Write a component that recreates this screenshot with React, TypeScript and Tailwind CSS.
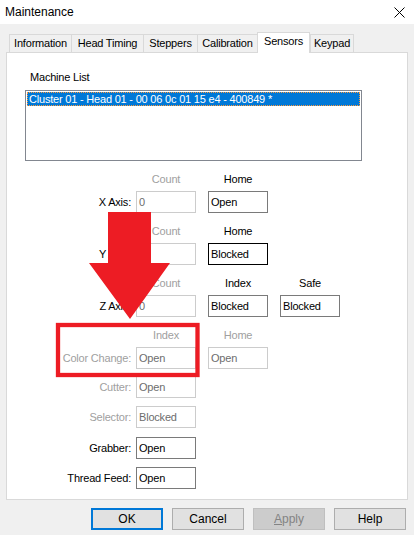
import React from 'react';

type Tone = 'disabled' | 'normal' | 'focus';

const tabs = ['Information', 'Head Timing', 'Steppers', 'Calibration', 'Sensors', 'Keypad'];
const tabWidths = ['w-[62px]', 'w-[72px]', 'w-[54px]', 'w-[60px]', 'w-[53px]', 'w-[44px]'];

function Box({ value, tone = 'normal' }: { value: string; tone?: Tone }) {
  const border =
    tone === 'disabled' ? 'border-[#cccccc] text-[#6d6d6d]' : tone === 'focus' ? 'border-black text-black' : 'border-[#7a7a7a] text-black';
  return (
    <div className={`w-[60px] h-[22px] border bg-white pl-[2px] flex items-center leading-[13px] ${border}`}>
      {value}
    </div>
  );
}

function Header({ cells }: { cells: { text: string; gray?: boolean }[] }) {
  return (
    <div className="flex h-[18px] leading-[13px]">
      <div className="w-[129px]" />
      <div className="flex gap-[12px]">
        {cells.map((c, i) => (
          <div key={i} className={`w-[60px] text-center ${c.gray ? 'text-[#a0a0a0]' : 'text-black'}`}>
            {c.text}
          </div>
        ))}
      </div>
    </div>
  );
}

function Row({ label, gray, children, className = '' }: { label: string; gray?: boolean; children: React.ReactNode; className?: string }) {
  return (
    <div className={`flex items-center h-[22px] ${className}`}>
      <div className={`w-[124px] text-right leading-[13px] ${gray ? 'text-[#a0a0a0]' : 'text-black'}`}>{label}</div>
      <div className="ml-[5px] flex gap-[12px]">{children}</div>
    </div>
  );
}

function Button({ label, variant }: { label: React.ReactNode; variant?: 'default' | 'disabled' }) {
  const cls =
    variant === 'default'
      ? 'border-2 border-[#0078d7] bg-[#e1e1e1] text-black'
      : variant === 'disabled'
      ? 'border border-[#bfbfbf] bg-[#cccccc] text-[#838383]'
      : 'border border-[#adadad] bg-[#e1e1e1] text-black';
  return <div className={`w-[72px] h-[22px] flex items-center justify-center text-[12px] ${cls}`}>{label}</div>;
}

export default function App() {
  return (
    <div
      className="relative w-[414px] h-[535px] bg-[#f0f0f0] flex flex-col text-[11px] tracking-[-0.2px] overflow-hidden"
      style={{ fontFamily: '"Liberation Sans", Arial, sans-serif' }}
    >
      {/* title bar */}
      <div className="h-[24px] bg-white flex items-center justify-between pl-[5px] pr-[9px]">
        <span className="text-[12px] tracking-normal text-black">Maintenance</span>
        <svg width="11" height="11" viewBox="0 0 11 11">
          <path d="M0.5 0.5 L10.5 10.5 M10.5 0.5 L0.5 10.5" stroke="#000" strokeWidth="1" />
        </svg>
      </div>

      {/* tabs */}
      <div className="relative z-10 flex items-end h-[21px] mt-[8px] pl-[9px]">
        {tabs.map((t, i) => {
          const selected = t === 'Sensors';
          return (
            <div
              key={t}
              className={`${tabWidths[i]} flex items-center justify-center border-t border-l border-[#d9d9d9] ${
                i === tabs.length - 1 || selected ? 'border-r' : ''
              } ${selected ? 'h-[21px] bg-white pb-[3px]' : 'h-[19px] border-b bg-[#f0f0f0]'} text-black`}
            >
              {t}
            </div>
          );
        })}
      </div>

      {/* panel */}
      <div className="-mt-px mx-[6px] h-[448px] bg-white border border-[#d9d9d9] flex flex-col">
        <div className="pl-[23px] pt-[18px] leading-[13px] text-black">Machine List</div>
        <div className="ml-[18px] mt-[6px] w-[337px] h-[71px] border border-[#828790] bg-white p-px">
          <div className="h-[14px] bg-[#0078d7] text-white leading-[12px] pl-[1px] border border-dotted border-[#ff9a3c] whitespace-nowrap">
            Cluster 01 - Head 01 - 00 06 0c 01 15 e4 - 400849 *
          </div>
        </div>

        <div className="mt-[12px] flex flex-col">
          <Header cells={[{ text: 'Count', gray: true }, { text: 'Home' }]} />
          <Row label="X Axis:">
            <Box value="0" tone="disabled" />
            <Box value="Open" />
          </Row>

          <div className="mt-[12px]">
            <Header cells={[{ text: 'Count', gray: true }, { text: 'Home' }]} />
          </div>
          <Row label="Y Axis:">
            <Box value="0" tone="disabled" />
            <Box value="Blocked" tone="focus" />
          </Row>

          <div className="mt-[12px]">
            <Header cells={[{ text: 'Count', gray: true }, { text: 'Index' }, { text: 'Safe' }]} />
          </div>
          <Row label="Z Axis:">
            <Box value="0" tone="disabled" />
            <Box value="Blocked" />
            <Box value="Blocked" />
          </Row>

          <div className="mt-[12px]">
            <Header cells={[{ text: 'Index', gray: true }, { text: 'Home', gray: true }]} />
          </div>
          <Row label="Color Change:" gray>
            <Box value="Open" tone="disabled" />
            <Box value="Open" tone="disabled" />
          </Row>

          <Row label="Cutter:" gray className="mt-[7px]">
            <Box value="Open" tone="disabled" />
          </Row>
          <Row label="Selector:" gray className="mt-[8px]">
            <Box value="Blocked" tone="disabled" />
          </Row>
          <Row label="Grabber:" className="mt-[9px]">
            <Box value="Open" />
          </Row>
          <Row label="Thread Feed:" className="mt-[8px]">
            <Box value="Open" />
          </Row>
        </div>
      </div>

      {/* buttons */}
      <div className="mt-[8px] flex justify-end gap-[9px] pr-[8px] tracking-normal">
        <Button label="OK" variant="default" />
        <Button label="Cancel" />
        <Button
          label={
            <span>
              <span className="underline">A</span>pply
            </span>
          }
          variant="disabled"
        />
        <Button label="Help" />
      </div>

      {/* annotation overlay */}
      <svg className="absolute left-0 top-0 pointer-events-none" width="414" height="535" viewBox="0 0 414 535">
        <polygon points="108,212 151,212 151,263 170,263 130,319 89,263 108,263" fill="#ed1c24" />
        <rect x="58" y="325" width="139.5" height="50" fill="none" stroke="#ed1c24" strokeWidth="4.3" />
      </svg>
    </div>
  );
}
